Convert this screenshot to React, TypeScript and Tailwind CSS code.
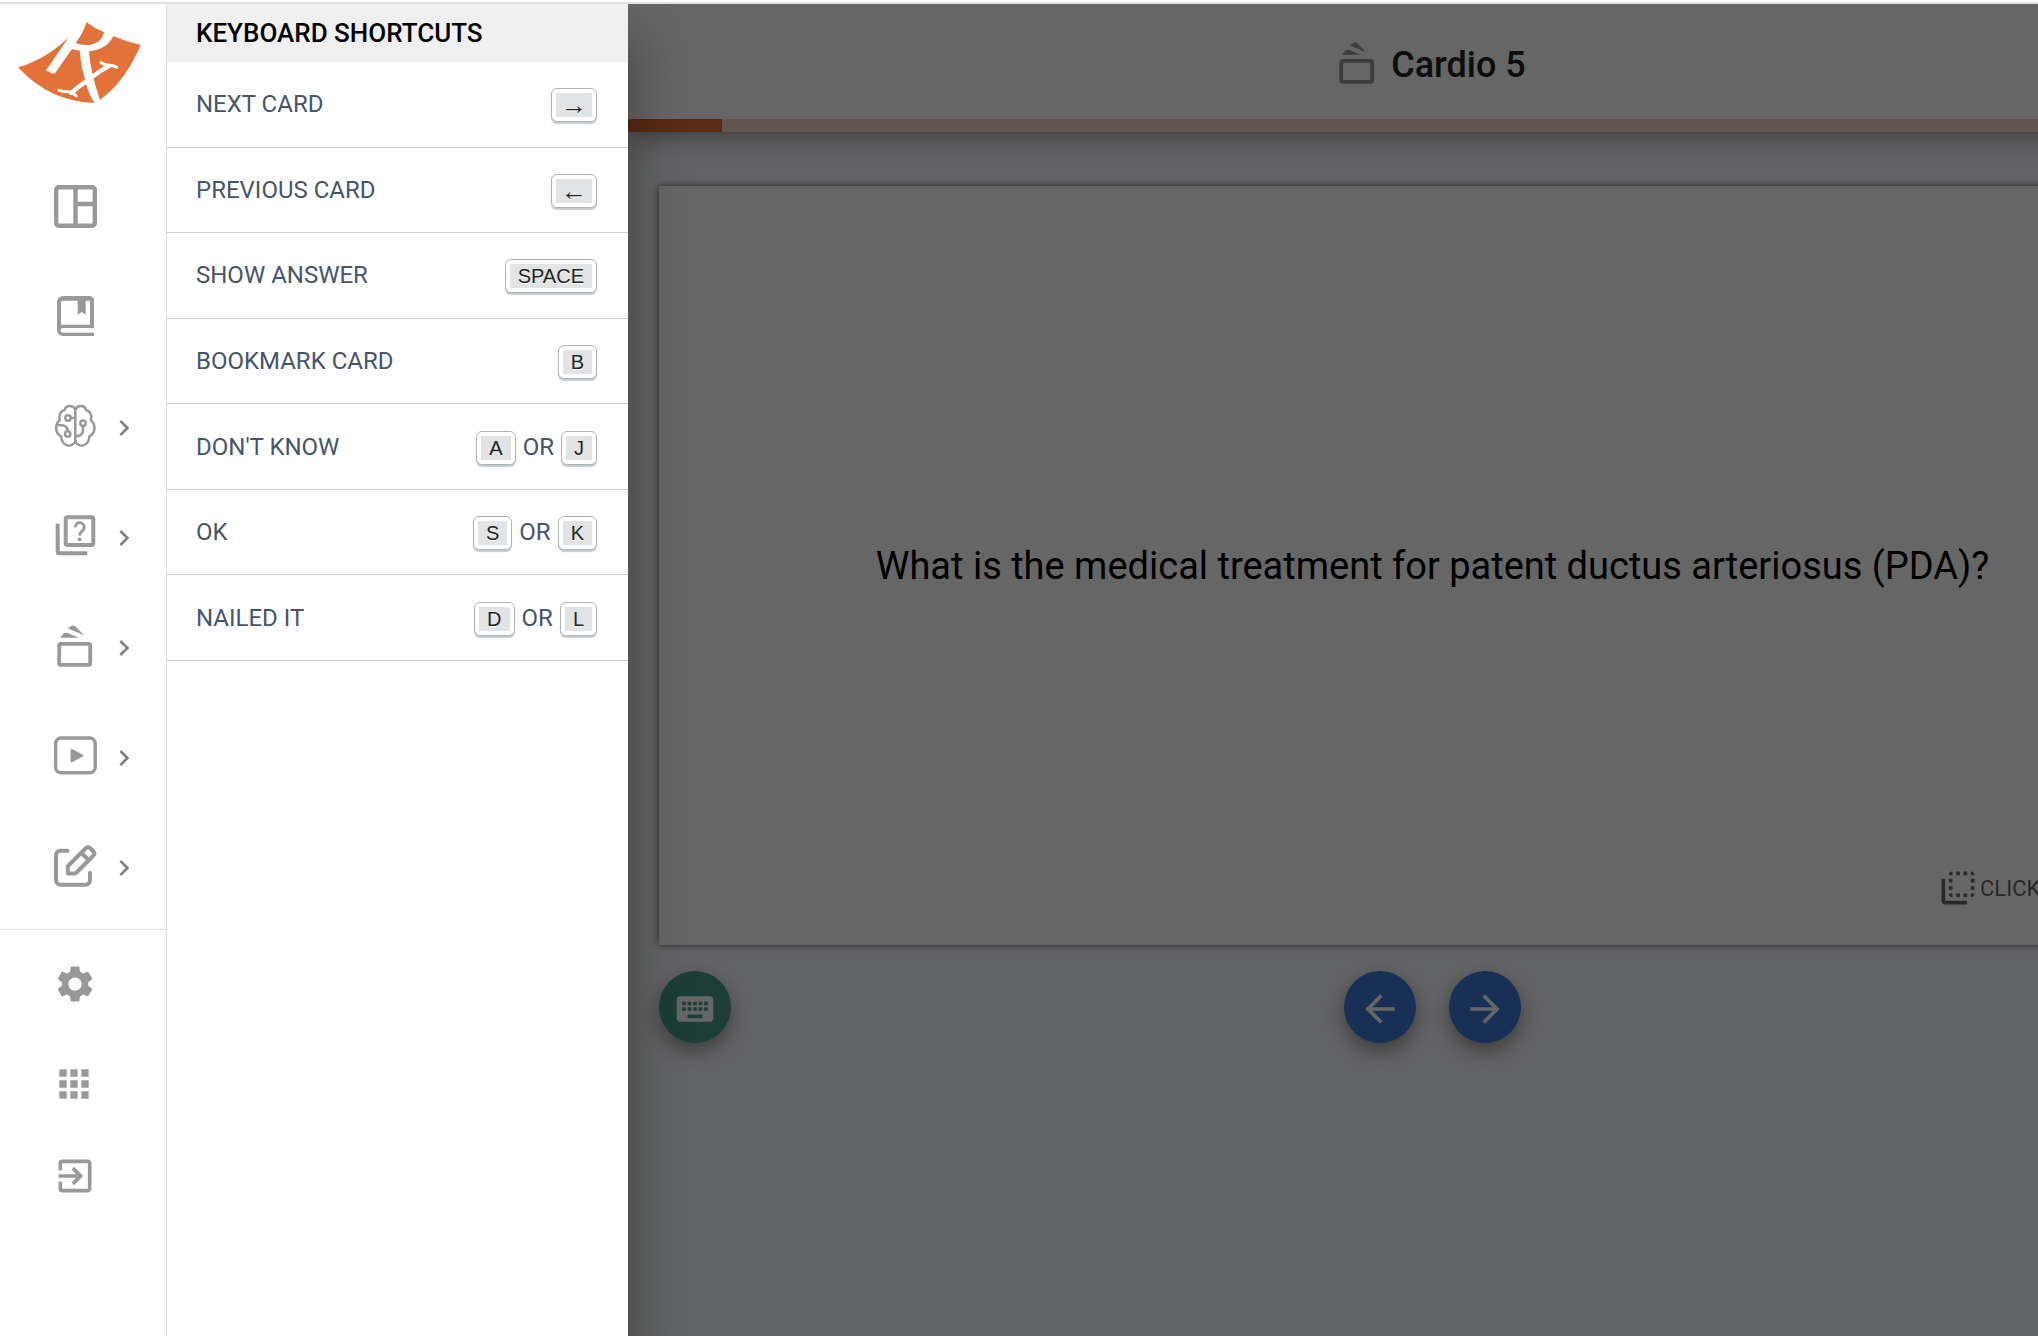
import type { ReactNode } from "react";
import clsx from "clsx";
import {
  MdApps,
  MdArrowBack,
  MdArrowForward,
  MdChevronRight,
  MdExitToApp,
  MdFlipToBack,
  MdKeyboard,
  MdSettings,
} from "react-icons/md";

const shortcuts = [
  { label: "NEXT CARD", keys: ["→"] },
  { label: "PREVIOUS CARD", keys: ["←"] },
  { label: "SHOW ANSWER", keys: ["SPACE"] },
  { label: "BOOKMARK CARD", keys: ["B"] },
  { label: "DON'T KNOW", keys: ["A", "J"] },
  { label: "OK", keys: ["S", "K"] },
  { label: "NAILED IT", keys: ["D", "L"] },
];

function Icon({ children }: { children: ReactNode }) {
  return (
    <svg
      viewBox="0 0 48 48"
      className="size-12 shrink-0"
      fill="none"
      stroke="currentColor"
      aria-hidden="true"
    >
      {children}
    </svg>
  );
}

function DashboardIcon() {
  return (
    <Icon>
      <rect x="5.2" y="3.2" width="38.6" height="38.6" rx="2.5" strokeWidth="4.4" />
      <path d="M24.5 3v39M24.5 20H44" strokeWidth="4.4" />
    </Icon>
  );
}

function BookIcon() {
  return (
    <Icon>
      <path
        fill="currentColor"
        stroke="none"
        fillRule="evenodd"
        d="M12 2h26.5A4.5 4.5 0 0 1 43 6.5V34H11.8a2.3 2.3 0 0 0 0 4.7H43V42H12a6 6 0 0 1-6-6V8a6 6 0 0 1 6-6ZM10 8.5v22.2h29V6.7h-4.3v14l-4-2.7-4 2.7v-14H11.8A1.8 1.8 0 0 0 10 8.5Z"
      />
    </Icon>
  );
}

function BrainIcon() {
  return (
    <Icon>
      <g strokeWidth="2.5" strokeLinecap="round" strokeLinejoin="round">
        <path d="M24.3 5.5C22.3.7 14.8.8 13.6 6 9.3 7 7.2 11.5 8.9 16c-5.3 4-5 13.4 1.3 16.3C10.6 42.6 21.6 44.6 24.3 37" />
        <path d="M24.3 5.5C26.3.7 33.8.8 35 6c4.3 1 6.4 5.5 4.7 10 5.3 4 5 13.4-1.3 16.3C38 42.6 27 44.6 24.3 37" />
        <path d="M24.3 5.5V37M20 14h4.3M32 22.3V26c0 4-2 6.2-7.7 6.2M16.7 27c0-4.2-2.5-6.2-9.5-6" />
        <circle cx="17" cy="14" r="2.7" />
        <circle cx="32" cy="19.3" r="2.7" />
        <circle cx="16.7" cy="30" r="2.7" />
      </g>
    </Icon>
  );
}

function QuizIcon() {
  return (
    <Icon>
      <rect x="14.7" y="3.3" width="27.6" height="27.6" rx="2" strokeWidth="4" />
      <path d="M6.7 9.7v28a1.6 1.6 0 0 0 1.6 1.6h28" strokeWidth="4" />
      <path
        d="M24.2 13.2a4.5 4.5 0 1 1 7.8 3c-1.9 2-3.4 2.6-3.4 5.4"
        strokeWidth="2.8"
      />
      <circle cx="28.6" cy="25.3" r="1.9" fill="currentColor" stroke="none" />
    </Icon>
  );
}

function DeckIcon() {
  return (
    <Icon>
      <rect x="8.2" y="19.9" width="31" height="21" rx="2" strokeWidth="3.8" />
      <path
        fill="currentColor"
        stroke="none"
        d="M9.3 13.7 12 10q1.6-2 4.6-1l11.1 4.7ZM17 4.6l3-2.5q2.3-1.6 4.8.6l8.2 8.6Z"
      />
    </Icon>
  );
}

function VideoIcon() {
  return (
    <Icon>
      <rect x="4.6" y="4" width="39.6" height="34.8" rx="5.5" strokeWidth="3.4" />
      <path
        d="M20.5 16v11.4l11-5.7Z"
        fill="currentColor"
        strokeWidth="2"
        strokeLinejoin="round"
      />
    </Icon>
  );
}

function EditIcon() {
  return (
    <Icon>
      <g strokeWidth="4" strokeLinecap="round" strokeLinejoin="round">
        <path d="M16.5 6.7H9.5A4.5 4.5 0 0 0 5 11.2v25a4.5 4.5 0 0 0 4.5 4.5h25a4.5 4.5 0 0 0 4.5-4.5V29" />
        <path d="M17.5 21.5 35 4q2-1.8 4 0l3.5 3.5q1.8 2 0 4L25 29q-.8.6-1.6.6h-5.2q-1.4 0-1.4-1.4V23q0-.8.7-1.5Z" />
        <path d="m31 9.5 6 6" strokeLinecap="butt" />
      </g>
    </Icon>
  );
}

function Logo() {
  return (
    <svg viewBox="54 66 369 243" className="h-[81px] w-[123px]" aria-label="Rx" role="img">
      <g fill="#e27239">
        <path d="M260 67Q284 86 312 97Q306 128 272 134Q246 137 227 129Q248 102 260 67Z" />
        <path d="M54 202Q136 178 205 113L137 213Q144 212 149 216Q156 222 165 220L216 147Q226 151 239 151Q243 202 257 245Q265 282 284 309Q150 306 54 202Z" />
        <path d="M340 108Q380 126 422 135Q374 247 300 299Q272 222 267 154Q322 148 340 108Z" />
      </g>
      <g fill="none" stroke="#fff" strokeLinecap="round">
        <path d="M303 187q8 8 24 9t23 6" strokeWidth="9" />
        <path d="M328 198q-26 12-53 34" strokeWidth="13" />
        <path d="M262 243q-22 12-48 36" strokeWidth="13" />
        <path d="M177 271q12 4 26 4t26 13" strokeWidth="9" />
      </g>
    </svg>
  );
}

const navItems = [
  { name: "Dashboard", icon: <DashboardIcon />, expandable: false },
  { name: "Library", icon: <BookIcon />, expandable: false },
  { name: "Study", icon: <BrainIcon />, expandable: true },
  { name: "Questions", icon: <QuizIcon />, expandable: true },
  { name: "Flash cards", icon: <DeckIcon />, expandable: true },
  { name: "Videos", icon: <VideoIcon />, expandable: true },
  { name: "Notes", icon: <EditIcon />, expandable: true },
];

function Sidebar() {
  return (
    <aside className="relative z-20 w-[167px] shrink-0 border-r border-[#dedede] bg-white text-[#999]">
      <a href="#" className="block h-[149px] pt-[18px] pl-[18px]">
        <Logo />
      </a>
      <nav className="border-b border-[#dedede] pb-1.5">
        {navItems.map((item) => (
          <a
            key={item.name}
            href="#"
            aria-label={item.name}
            className="flex h-[110px] items-center gap-[9px] pl-[51px]"
          >
            {item.icon}
            {item.expandable && <MdChevronRight className="size-8 text-[#808080]" />}
          </a>
        ))}
      </nav>
      <nav>
        <a href="#" aria-label="Settings" className="flex h-[108px] items-center pl-[53px]">
          <MdSettings className="size-11" />
        </a>
        <a href="#" aria-label="Apps" className="flex h-[92px] items-center pl-[52px]">
          <MdApps className="size-11" />
        </a>
        <a href="#" aria-label="Log out" className="flex h-[92px] items-center pl-[53px]">
          <MdExitToApp className="size-11" />
        </a>
      </nav>
    </aside>
  );
}

function Key({ value }: { value: string }) {
  const isArrow = value === "→" || value === "←";

  return (
    <kbd className="mt-0.5 rounded-md border border-[#adb3b9] bg-white p-1 shadow-[0_2px_1px_#c9cccf]">
      <span
        className={clsx(
          "block bg-[#e1e3e5] font-['Liberation_Sans',sans-serif] leading-6 text-[#222] [text-shadow:0_1px_0_#fff]",
          isArrow ? "px-[5px] text-[26px]" : "px-2 text-xl"
        )}
      >
        {value}
      </span>
    </kbd>
  );
}

function ShortcutsPanel() {
  return (
    <section className="relative z-10 w-[461px] shrink-0 bg-white shadow-[8px_32px_48px_rgba(0,0,0,0.3)]">
      <h2 className="flex h-[58px] items-center bg-[#f0f0f0] px-[29px] text-[26px] font-medium text-black">
        KEYBOARD SHORTCUTS
      </h2>
      <ul className="grid h-[599px] auto-rows-fr">
        {shortcuts.map(({ label, keys }) => (
          <li
            key={label}
            className="flex items-center justify-between border-b border-[#d0d0d2] pr-[31px] pl-[29px] text-2xl text-[#475569]"
          >
            {label}
            <span className="flex items-center gap-[7px]">
              <Key value={keys[0]} />
              {keys[1] && (
                <>
                  OR <Key value={keys[1]} />
                </>
              )}
            </span>
          </li>
        ))}
      </ul>
    </section>
  );
}

const fab =
  "flex size-[72px] items-center justify-center rounded-full pt-1 text-white shadow-[0_8px_20px_rgba(0,0,0,0.4)]";

export default function App() {
  return (
    <div className="flex min-h-screen w-full flex-col overflow-hidden bg-white font-[Roboto,sans-serif]">
      <div className="relative z-20 h-1 border-b-2 border-[#e0e0e0] bg-white" />
      <div className="flex grow">
        <Sidebar />
        <ShortcutsPanel />
        <main className="relative w-[calc(100%-429px)] shrink-0 bg-[#f8f9fd]">
          <header className="shadow-[0_4px_24px_rgba(0,0,0,0.4)]">
            <div className="flex h-[115px] items-center justify-center gap-2.5 bg-white pt-1.5 pr-1.5">
              <span className="text-[#999]">
                <DeckIcon />
              </span>
              <h1 className="text-4xl font-medium text-[#222]">Cardio 5</h1>
            </div>
            <div className="h-[13px] bg-[#f5d5c8]">
              <div className="h-full w-[94px] bg-[#e16b39]" />
            </div>
          </header>
          <div className="px-[31px] pt-[54px]">
            <article className="flex h-[759px] flex-col bg-white shadow-[0_0_8px_rgba(0,0,0,0.6)]">
              <p className="flex grow items-center justify-center pt-[82px] text-[38px] text-black">
                What is the medical treatment for patent ductus arteriosus (PDA)?
              </p>
              <button className="mb-[33px] flex h-12 w-[270px] items-center self-end text-[22px] text-[#666]">
                <MdFlipToBack className="size-11" />
                CLICK
              </button>
            </article>
            <div className="grid grid-cols-3 pt-[26px]">
              <button aria-label="Keyboard shortcuts" className={`${fab} bg-[#469c8b]`}>
                <MdKeyboard className="size-11" />
              </button>
              <div className="flex justify-center gap-[33px]">
                <button aria-label="Previous card" className={`${fab} bg-[#3c78d7]`}>
                  <MdArrowBack className="size-11" />
                </button>
                <button aria-label="Next card" className={`${fab} bg-[#3c78d7]`}>
                  <MdArrowForward className="size-11" />
                </button>
              </div>
            </div>
          </div>
          <div className="absolute inset-0 bg-black/60" />
        </main>
      </div>
    </div>
  );
}
